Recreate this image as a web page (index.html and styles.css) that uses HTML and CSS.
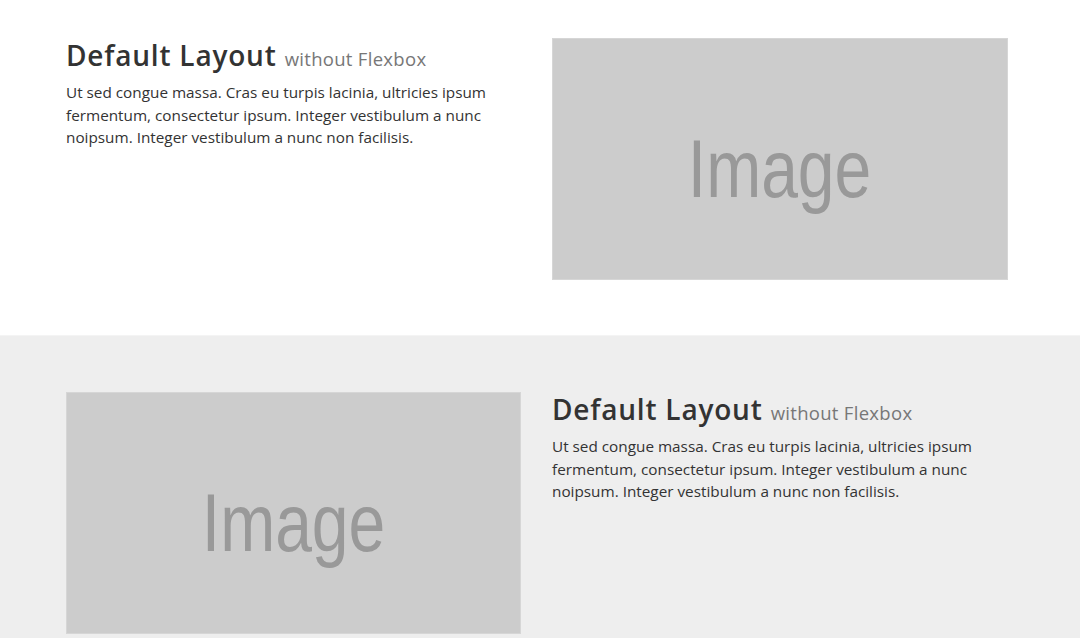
FILE: index.html
```html
<!DOCTYPE html>
<html lang="en">
<head>
    <meta charset="UTF-8">
    <title>Default Layout</title>
    <meta name="viewport" content="width=device-width, initial-scale=1">
    <link rel="stylesheet" href="styles.css">
</head>
<body>
    <section class="band band-first">
        <div class="row">
            <div class="copy">
                <h2>Default Layout <small>without Flexbox</small></h2>
                <p>Ut sed congue massa. Cras eu turpis lacinia, ultricies ipsum fermentum, consectetur ipsum. Integer vestibulum a nunc noipsum. Integer vestibulum a nunc non facilisis.</p>
            </div>
            <div class="placeholder"><span>Image</span></div>
        </div>
    </section>

    <section class="band band-alt">
        <div class="row">
            <div class="placeholder"><span>Image</span></div>
            <div class="copy">
                <h2>Default Layout <small>without Flexbox</small></h2>
                <p>Ut sed congue massa. Cras eu turpis lacinia, ultricies ipsum fermentum, consectetur ipsum. Integer vestibulum a nunc noipsum. Integer vestibulum a nunc non facilisis.</p>
            </div>
        </div>
    </section>
</body>
</html>
```

FILE: styles.css
```css
body {
    margin: 0;
    font-family: "Open Sans", "Noto Sans", Arial, sans-serif;
    color: #333;
    background: #fff;
}

.band {
    padding: 56px 0 55px 0;
}
.band-first {
    padding-top: 38px;
}
.band-alt {
    background: #eee;
    border-top: 1px solid #f4f4f4;
}

.row {
    width: 942px;
    margin-left: 66px;
    display: grid;
    grid-template-columns: 455px 456px;
    gap: 31px;
    align-items: start;
}

h2 {
    margin: 0;
    font-size: 28px;
    font-weight: 600;
    line-height: 34px;
    color: #333;
    letter-spacing: 0.8px;
}
h2 small {
    font-size: 18.5px;
    font-weight: 400;
    color: #777;
    letter-spacing: 0.3px;
}

p {
    margin: 5px 0 0 0;
    font-size: 15.3px;
    line-height: 22.5px;
    color: #333;
}

.placeholder {
    height: 242px;
    background: #ccc;
    box-sizing: border-box;
    border: 1px solid #d6d6d6;
    display: flex;
    justify-content: center;
    align-items: flex-start;
    overflow: hidden;
}
.placeholder span {
    font-family: "Liberation Sans", Arial, sans-serif;
    font-size: 81px;
    line-height: 1;
    color: #999;
    margin-top: 90px;
    transform: scaleX(0.815);
}
```
